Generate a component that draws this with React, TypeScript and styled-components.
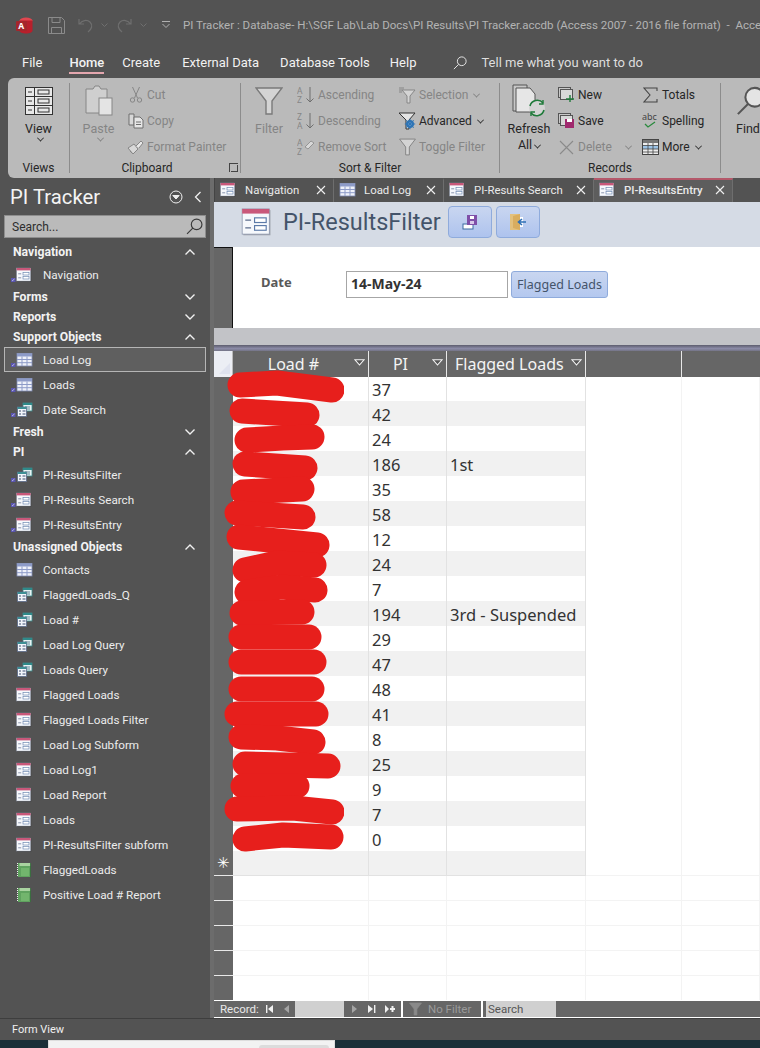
import React from 'react';
import styled, { createGlobalStyle } from 'styled-components';

const Global = createGlobalStyle`
  html, body { margin: 0; padding: 0; background: #535353; }
  * { box-sizing: border-box; }
  #root { width: 760px; height: 1048px; overflow: hidden; }
`;

const FONT = `Roboto, "Noto Sans", "Liberation Sans", sans-serif`;
const DATA_FONT = `"Noto Sans", "Open Sans", "Liberation Sans", sans-serif`;

const Page = styled.div`
  width: 760px; height: 1048px; display: flex; flex-direction: column;
  background: #535353; font-family: ${FONT}; overflow: hidden;
`;

/* ---------- Title bar ---------- */
const TitleBar = styled.div`
  height: 48px; display: flex; align-items: center; padding: 2px 0 0 16px; flex: none; overflow: hidden;
`;
const QuickGroup = styled.div`display: flex; align-items: center; flex: none;`;
const QuickSlot = styled.span<{ $w: number }>`
  width: ${p => p.$w}px; height: 20px; display: flex; align-items: center; flex: none;
`;
const TitleText = styled.div`
  font-size: 11.5px; color: #b4b4b4; white-space: pre;
`;

/* ---------- Ribbon tabs ---------- */
const TabStrip = styled.div`
  height: 30px; display: flex; align-items: flex-start; padding: 5px 0 0 22px; flex: none;
`;
const RibbonTab = styled.div<{ $active?: boolean; $left: number }>`
  font-size: 13px; line-height: 20px; height: 21px; color: #f2f2f2; margin-left: ${p => p.$left}px;
  font-weight: ${p => (p.$active ? 500 : 400)}; white-space: nowrap;
  border-bottom: ${p => (p.$active ? '2px solid #e3a6ae' : '2px solid transparent')};
`;
const TellMe = styled.div`
  display: flex; align-items: center; margin-left: 37px; gap: 14px; font-size: 13px; line-height: 20px; color: #dedede;
`;

/* ---------- Ribbon ---------- */
const Ribbon = styled.div`
  height: 100px; margin-left: 8px; background: #bababa; border-radius: 6px 0 0 6px;
  display: flex; flex: none; overflow: hidden;
`;
const RGroup = styled.div<{ $w: number; $last?: boolean }>`
  position: relative; width: ${p => p.$w}px; flex: none; display: flex; flex-direction: column;
  margin: 5px 0 5px 0; border-right: ${p => (p.$last ? 'none' : '1px solid #8c8c8c')};
`;
const RBody = styled.div`flex: 1; display: flex; min-height: 0;`;
const RLabel = styled.div<{ $pad?: number }>`
  height: 10px; line-height: 10px; font-size: 12px; text-align: center; color: #262626;
  padding-right: ${p => p.$pad || 0}px; white-space: nowrap; flex: none;
`;
const BigButton = styled.div<{ $w: number; $off?: boolean; $start?: boolean }>`
  width: ${p => p.$w}px; flex: none; display: flex; flex-direction: column;
  align-items: ${p => (p.$start ? 'flex-start' : 'center')};
  padding-left: ${p => (p.$start ? 15 : 0)}px;
  color: ${p => (p.$off ? '#858585' : '#262626')}; font-size: 12.5px; line-height: 16px; padding-top: 2px;
  white-space: nowrap;
`;
const BigIcon = styled.div`height: 32px; display: flex; align-items: center; justify-content: center; margin-bottom: 4px;`;
const Caret = styled.span<{ $off?: boolean; $gap?: number }>`
  display: inline-block; width: 5px; height: 5px; border: solid ${p => (p.$off ? '#858585' : '#333')};
  border-width: 0 1px 1px 0; transform: rotate(45deg) translate(-1px, -1px); margin-left: ${p => p.$gap || 3}px;
`;
const SmallCol = styled.div<{ $w: number }>`
  width: ${p => p.$w}px; flex: none; display: flex; flex-direction: column; margin-top: -1px;
`;
const SmallBtn = styled.div<{ $off?: boolean }>`
  height: 26px; flex: none; display: flex; align-items: center; gap: 3px; font-size: 12px; white-space: nowrap;
  color: ${p => (p.$off ? '#858585' : '#262626')};
`;
const IconSlot = styled.span<{ $w?: number }>`
  width: ${p => p.$w || 17}px; height: 18px; display: flex; align-items: center; justify-content: center; flex: none;
`;
const Launcher = styled.div`
  position: absolute; right: 2px; bottom: 1px; width: 9px; height: 9px;
  border: solid #444; border-width: 1px 0 0 1px;
  &::after { content: ''; position: absolute; right: 0; bottom: 0; width: 6px; height: 6px;
    border: solid #444; border-width: 0 1px 1px 0; }
`;

/* ---------- Main ---------- */
const Main = styled.div`height: 840px; display: flex; flex: none;`;

const Nav = styled.div`
  width: 210px; flex: none; display: flex; flex-direction: column; background: #535353;
`;
const NavHead = styled.div`
  height: 37px; display: flex; align-items: center; padding: 0 0 0 10px; flex: none;
  color: #f4f4f4; font-size: 20.3px;
`;
const NavTitle = styled.span`flex: 1;`;
const NavCtl = styled.span<{ $w: number }>`
  width: ${p => p.$w}px; display: flex; justify-content: center; align-items: center; flex: none;
`;
const NavSearch = styled.div`
  margin: 0 4px 0 4px; height: 23px; background: #bababa; border: 1px solid #8e8e8e; flex: none;
  display: flex; align-items: center; justify-content: space-between; padding: 0 2px 0 7px;
  font-size: 12px; color: #2d2d2d;
`;
const NavList = styled.div`margin-top: 4px; display: flex; flex-direction: column;`;
const NavHeader = styled.div`
  height: 20px; flex: none; display: flex; align-items: center; justify-content: space-between;
  padding: 0 14px 0 13px; font-size: 12.2px; font-weight: 700; color: #f2f2f2;
`;
const NavItem = styled.div<{ $sel?: boolean }>`
  height: 25px; flex: none; display: flex; align-items: center; gap: 11px;
  margin: 0 4px; padding-left: 11px; font-size: 11.7px; color: #ececec; white-space: nowrap;
  border: 1px solid ${p => (p.$sel ? '#b5b5b5' : 'transparent')};
  background: ${p => (p.$sel ? '#5f5f5f' : 'transparent')};
`;
const NavRule = styled.div`width: 4px; flex: none; background: #6c6c6c;`;

const Content = styled.div`flex: 1; min-width: 0; display: flex; flex-direction: column; position: relative;`;
const DocTabs = styled.div`
  height: 24px; flex: none; display: flex; background: #535353; border-left: 1px solid #444;
`;
const DocTab = styled.div<{ $w: number; $active?: boolean }>`
  width: ${p => p.$w}px; flex: none; display: flex; align-items: center; padding: 0 7px 3px 5px; gap: 9px;
  font-size: 11.4px; white-space: nowrap; color: #eaeaea;
  font-weight: ${p => (p.$active ? 500 : 400)};
  border-right: 1px solid #6e6e6e;
  border-top: ${p => (p.$active ? '2px solid #b4586a' : '2px solid transparent')};
  background: ${p => (p.$active ? '#5d5d5d' : 'transparent')};
`;
const DocTabLabel = styled.span`flex: 1;`;

const FormHead = styled.div`
  height: 45px; flex: none; background: #d5dbe5; display: flex; align-items: center;
  padding: 0 0 5px 27px;
`;
const FormTitle = styled.div`
  font-size: 23.5px; color: #44546a; margin: 0 8px 0 11px; white-space: nowrap; width: 157px;
`;
const FormBtn = styled.div`
  width: 44px; height: 32px; margin-right: 4px; border-radius: 4px; border: 1px solid #8fabdc;
  background: linear-gradient(#c9d6f0, #aec3ee); display: flex; align-items: center; justify-content: center;
`;

const Detail = styled.div`height: 81px; flex: none; display: flex; background: #fff; font-family: ${DATA_FONT};`;
const DetailSel = styled.div`
  width: 19px; flex: none; background: #666; border-right: 1px solid #111; border-top: 1px solid #111;
`;
const DetailBody = styled.div`flex: 1; display: flex; align-items: flex-start; padding: 24px 0 0 28px;`;
const DateLabel = styled.div`
  width: 85px; font-size: 13px; font-weight: 700; color: #595959; line-height: 23px;
`;
const DateInput = styled.div`
  width: 162px; height: 27px; border: 1px solid #a6a6a6; font-size: 14px; font-weight: 700; color: #333;
  padding: 0 0 0 4px; line-height: 23px; margin-right: 3px; background: #fff;
`;
const FlagBtn = styled.div`
  width: 97px; height: 27px; border-radius: 3px; border: 1px solid #8fabdc;
  background: linear-gradient(#c9d6f0, #b4c8ef); color: #44546a; font-size: 12.5px; line-height: 25px; text-align: center;
`;

const Band = styled.div`height: 17px; flex: none; background: #c2c3c7;`;
const Splitter = styled.div`
  height: 6px; flex: none; background: linear-gradient(#5d5d6e, #8c8ca8 60%, #737385);
`;

const Sheet = styled.div`flex: 1; min-height: 0; position: relative; overflow: hidden; background: #fff; font-family: ${DATA_FONT};`;
const Row = styled.div`
  display: grid; grid-template-columns: 19px 136px 78px 139px 96px 78px; height: 25px;
`;
const HeadSel = styled.div`
  background: #eceef4; position: relative; border-right: 1px solid #bbb;
  &::after { content: ''; position: absolute; right: 2px; bottom: 3px; width: 0; height: 0;
    border-left: 11px solid transparent; border-bottom: 11px solid #dfe2ee; }
`;
const HeadCell = styled.div<{ $line?: boolean; $left?: boolean }>`
  background: #666; color: #f4f4f4; font-size: 16px; position: relative; line-height: 26px;
  text-align: ${p => (p.$left ? 'left' : 'center')};
  padding: ${p => (p.$left ? '0 0 0 8px' : '0 14px 0 0')};
  border-right: ${p => (p.$line === false ? 'none' : '1px solid #e8e8e8')};
  white-space: nowrap;
`;
const SortMark = styled.svg`position: absolute; right: 3px; top: 8px;`;
const RowSel = styled.div`
  background: #666; border-bottom: 1px solid #e8e8e8; color: #fff; font-size: 15px; text-align: center; line-height: 22px;
`;
const Cell = styled.div<{ $alt?: boolean; $data?: boolean }>`
  background: ${p => (p.$alt ? '#f1f1f1' : '#fff')};
  border-right: 1px solid ${p => (p.$data ? '#e2e2e2' : '#f3f3f3')};
  border-bottom: 1px solid ${p => (p.$data ? '#e2e2e2' : '#f3f3f3')};
  font-size: 16.5px; line-height: 25px; color: #333; padding: 1px 0 0 3px; white-space: nowrap;
`;
const Scribble = styled.svg`position: absolute; left: 0; top: 0; pointer-events: none;`;

const RecordBar = styled.div`
  height: 18px; flex: none; display: flex; align-items: stretch; background: #fff; padding: 1px 0;
  font-size: 11.5px; color: #e8e8e8;
`;
const RecNav = styled.div`
  width: 187px; flex: none; display: flex; align-items: center; background: #666; padding-left: 6px;
`;
const RecLabel = styled.span`width: 40px; flex: none;`;
const RecGlyph = styled.span<{ $w: number; $dim?: boolean }>`
  width: ${p => p.$w}px; flex: none; display: flex; justify-content: center; opacity: ${p => (p.$dim ? 0.45 : 1)};
`;
const RecBox = styled.div`width: 49px; flex: none; height: 100%; background: #d0d0d0; margin: 0 1px;`;
const NoFilter = styled.div`
  width: 78px; flex: none; margin-left: 2px; background: #666; color: #9a9a9a; display: flex; align-items: center;
  padding-left: 6px; gap: 6px;
`;
const RecSearchWrap = styled.div`
  flex: 1; margin-left: 2px; background: #666; display: flex; padding-left: 3px;
`;
const RecSearch = styled.div`
  width: 70px; background: #d0d0d0; color: #555; padding-left: 2px; line-height: 16px;
`;

const Status = styled.div`
  height: 22px; flex: none; background: #535353; border-top: 1px solid #3e3e3e; color: #f0f0f0;
  font-size: 11px; line-height: 21px; padding-left: 12px;
`;
const Desktop = styled.div`flex: 1; background: #1b2f38; display: flex; padding-left: 48px;`;
const DesktopWindow = styled.div`
  width: 287px; background: #f2f2f2; border: 1px solid #ddd; border-bottom: none; display: flex; justify-content: flex-end; padding: 4px 5px 0 0;
`;
const DesktopPill = styled.div`width: 70px; background: #dcdcdc; border-radius: 3px 3px 0 0;`;
const OverSvg = styled.svg`overflow: visible; flex: none;`;

/* ---------- Icons ---------- */
const Shortcut = () => (
  <g>
    <rect x="-5" y="11" width="4.5" height="4" fill="#5a55b0" />
    <path d="M-4 14l2.5-2" stroke="#cfcfe8" strokeWidth="0.8" />
  </g>
);

const FormIco = ({ sc, size = 16 }: { sc?: boolean; size?: number }) => (
  <OverSvg width={size} height={size} viewBox="0 0 16 16">
    <rect x="1.2" y="1.6" width="14" height="13" fill="#000" opacity=".25" />
    <rect x=".6" y="1" width="14" height="13" fill="#f6f8fc" stroke="#8b94ac" strokeWidth=".4" />
    <rect x=".6" y="1" width="14" height="2.4" fill="#c9587a" />
    <path d="M2.2 6.8h3M2.2 10.8h3" stroke="#5c6c8c" strokeWidth=".7" />
    <rect x="7" y="5.6" width="6" height="2.4" fill="#fff" stroke="#5c7aa8" strokeWidth=".6" />
    <rect x="7" y="9.6" width="6" height="2.4" fill="#fff" stroke="#5c7aa8" strokeWidth=".6" />
    {sc && <Shortcut />}
  </OverSvg>
);
const TableIco = ({ sc }: { sc?: boolean }) => (
  <OverSvg width="16" height="16" viewBox="0 0 16 16">
    <rect x="1" y="1.5" width="15" height="12.5" fill="#eef1f9" stroke="#7f8cb4" strokeWidth=".8" />
    <rect x="1" y="1.5" width="15" height="3" fill="#8d9bc8" />
    <path d="M1 7.5h15M1 10.7h15M6 4.5v9.5M11 4.5v9.5" stroke="#8d9bc8" strokeWidth="1" />
    {sc && <Shortcut />}
  </OverSvg>
);
const QueryIco = ({ sc }: { sc?: boolean }) => (
  <OverSvg width="16" height="16" viewBox="0 0 16 16">
    <rect x="7" y="1" width="9" height="8" fill="#e8f3f3" stroke="#3c8c8c" strokeWidth=".8" />
    <rect x="7" y="1" width="9" height="2" fill="#2f8a8a" />
    <path d="M9 5h5M9 7h5" stroke="#3c6a80" strokeWidth=".8" />
    <rect x="1.5" y="5" width="9" height="9.5" fill="#f3f6fb" stroke="#5a6a88" strokeWidth=".8" />
    <rect x="1.5" y="5" width="9" height="2" fill="#3e8f94" />
    <path d="M3 9h2M6.5 9h3M3 12h2M6.5 12h3" stroke="#3f4f70" strokeWidth="1" />
    {sc && <Shortcut />}
  </OverSvg>
);
const ReportIco = () => (
  <svg width="16" height="16" viewBox="0 0 16 16">
    <rect x="2" y="1" width="12.5" height="14" fill="#5fa35f" />
    <rect x="3.5" y="1" width="11" height="3" fill="#a9d3a0" />
    <rect x="5" y="6" width="8" height="8" fill="#72b56d" />
    <path d="M1.5 1v14" stroke="#f0f0f0" strokeWidth="1" strokeDasharray="1 1" />
    <path d="M14.5 1v14" stroke="#34693a" strokeWidth=".8" />
  </svg>
);

const Chevron = ({ up }: { up?: boolean }) => (
  <svg width="12" height="8" viewBox="0 0 12 8" fill="none" stroke="#f0f0f0" strokeWidth="1.4">
    <path d={up ? 'M1.5 6.5 6 2l4.5 4.5' : 'M1.5 1.5 6 6l4.5-4.5'} />
  </svg>
);
const Close = () => (
  <svg width="10" height="10" viewBox="0 0 10 10" stroke="#f0f0f0" strokeWidth="1.1"><path d="M1 1l8 8M9 1L1 9" /></svg>
);
const Lens = ({ size = 14, color = '#e8e8e8', fill = 'none' }: { size?: number; color?: string; fill?: string }) => (
  <svg width={size} height={size} viewBox="0 0 16 16" fill={fill} stroke={color} strokeWidth="1.1">
    <circle cx="10" cy="6" r="5" /><path d="M6.4 9.6 1 15" />
  </svg>
);
const Sort = () => (
  <SortMark width="11" height="7" viewBox="0 0 11 7" fill="#555" stroke="#f4f4f4" strokeWidth="1.1">
    <path d="M1 .8h9L5.5 6z" />
  </SortMark>
);

const off = '#868686';
const ViewIco = () => (
  <svg width="28" height="28" viewBox="0 0 28 28" fill="#e9e9e9" stroke="#333" strokeWidth="1">
    <rect x=".5" y=".5" width="27" height="27" />
    <path d="M9.5.5v27M.5 9.5h27M.5 18.5h27" fill="none" />
    <path d="M3 5h4M3 14h4M3 23h4" fill="none" />
    <rect x="13" y="3" width="11" height="4" /><rect x="13" y="12" width="11" height="4" /><rect x="13" y="21" width="11" height="4" />
  </svg>
);
const PasteIco = () => (
  <svg width="28" height="32" viewBox="0 0 28 32" stroke={off} strokeWidth="1">
    <path d="M1 4h7l2-3h4l2 3h6v24H1z" fill="#cfcfcf" />
    <rect x="14" y="13" width="13" height="17" fill="#e4e4e4" />
  </svg>
);
const CutIco = () => (
  <svg width="14" height="16" viewBox="0 0 14 16" fill="none" stroke={off} strokeWidth="1">
    <path d="M3.5 0l5 11M10.5 0l-5 11" /><circle cx="3.5" cy="13" r="2.2" /><circle cx="10.5" cy="13" r="2.2" />
  </svg>
);
const CopyIco = () => (
  <svg width="16" height="16" viewBox="0 0 16 16" fill="#d8d8d8" stroke="#6f6f6f" strokeWidth="1">
    <path d="M1 1h5v11H1z" /><path d="M6 4h6l3 3v8H6z" fill="#e6e6e6" /><path d="M8 9h5M8 11.5h5" fill="none" />
  </svg>
);
const BrushIco = () => (
  <svg width="17" height="16" viewBox="0 0 17 16" fill="none" stroke={off} strokeWidth="1">
    <path d="M1 9l6-4 4 5-5 5z" fill="#d8d8d8" /><path d="M9 7l5-5 2 2-4 5" fill="#e8e8e8" /><path d="M3 12l2 2" />
  </svg>
);
const Funnel = ({ w = 17, h = 18, stroke = '#7a7a7a', fill = '#d4d4d4' }: { w?: number; h?: number; stroke?: string; fill?: string }) => (
  <svg width={w} height={h} viewBox="0 0 28 28" fill={fill} stroke={stroke} strokeWidth="1.4">
    <path d="M1 1h26L17 14v13h-6V14z" />
  </svg>
);
const SortIco = ({ a, b, mark }: { a: string; b: string; mark?: boolean }) => (
  <svg width="18" height="18" viewBox="0 0 18 18">
    <text x="0" y="8" fontSize="8.5" fontFamily="Noto Sans, sans-serif" fill={off}>{a}</text>
    <text x="0" y="17" fontSize="8.5" fontFamily="Noto Sans, sans-serif" fill={off}>{b}</text>
    {mark
      ? <path d="M8 9l6-6 3 2-6 6z" fill="#d8d8d8" stroke={off} strokeWidth=".8" />
      : <path d="M13 1v15M9.5 12.5 13 16l3.5-3.5" fill="none" stroke="#6f6f6f" strokeWidth="1" />}
  </svg>
);
const AdvancedIco = () => (
  <svg width="18" height="18" viewBox="0 0 18 18">
    <path d="M1 1h16L11 8v9H8V8z" fill="#e4e4e4" stroke="#333" strokeWidth="1" />
    <circle cx="12" cy="12" r="4" fill="#2e75b6" /><circle cx="12" cy="12" r="1.5" fill="#e8eef8" />
    <path d="M12 6.8v10.4M6.8 12h10.4M8.3 8.3l7.4 7.4M15.7 8.3l-7.4 7.4" stroke="#2e75b6" strokeWidth="1" />
  </svg>
);
const SelectionIco = () => (
  <svg width="18" height="18" viewBox="0 0 18 18">
    <path d="M4 4h13l-5 6v7H9v-7z" fill="#d4d4d4" stroke={off} strokeWidth="1" />
    <path d="M1 1h5v3H4v3H1z" fill="#9a9a9a" opacity=".8" />
  </svg>
);
const RefreshIco = () => (
  <svg width="34" height="34" viewBox="0 0 34 34" fill="none">
    <path d="M1 1h14v26H1z" fill="#c8c8c8" stroke="#555" />
    <path d="M4 4h14l5 6v18H4z" fill="#e6e6e6" stroke="#555" />
    <circle cx="25" cy="24" r="8" fill="#d4d4d4" />
    <path d="M18 22a7.5 7.5 0 0 1 13-3M32 26a7.5 7.5 0 0 1-13 3" stroke="#1f7a3a" strokeWidth="1.6" />
    <path d="M31 16v4h-4M19 32v-4h4" stroke="#1f7a3a" strokeWidth="1.4" />
  </svg>
);
const RecBase = ({ children }: { children?: React.ReactNode }) => (
  <svg width="17" height="16" viewBox="0 0 17 16" fill="none">
    <rect x=".5" y=".5" width="12" height="10" stroke="#555" fill="#c8c8c8" />
    <rect x="2.5" y="2.5" width="12" height="10" stroke="#555" fill="#d8d8d8" />
    {children}
  </svg>
);
const SumIco = () => (
  <svg width="15" height="16" viewBox="0 0 15 16" fill="none" stroke="#444" strokeWidth="1.1"><path d="M14 4V1H1l6 7-6 7h13v-3" /></svg>
);
const SpellIco = () => (
  <svg width="17" height="18" viewBox="0 0 17 18">
    <text x="0" y="8" fontSize="9" fontFamily="Noto Sans, sans-serif" fill="#444">abc</text>
    <path d="M3 12l3 3 7-5" fill="none" stroke="#2a8a3e" strokeWidth="1.3" />
  </svg>
);
const GridIco = () => (
  <svg width="17" height="16" viewBox="0 0 17 16">
    <rect x=".5" y=".5" width="16" height="15" fill="#eee" stroke="#444" />
    <rect x="1" y="1" width="15" height="3" fill="#777" />
    <rect x="1" y="6.5" width="15" height="3.5" fill="#9cc3e6" />
    <path d="M1 6.5h15M1 10h15M1 13h15M6 4v11M11 4v11" stroke="#444" strokeWidth=".8" />
  </svg>
);
const AccessIco = () => (
  <svg width="17" height="17" viewBox="0 0 17 17">
    <ellipse cx="10" cy="3.5" rx="6.5" ry="3" fill="#e0464f" />
    <path d="M3.5 3.5v10c0 1.8 3 3 6.5 3s6.5-1.2 6.5-3v-10z" fill="#b81f2b" />
    <rect x="0" y="4" width="11" height="10" rx="1" fill="#a4262c" />
    <text x="2.3" y="12" fontSize="8.5" fontWeight="700" fontFamily="Noto Sans, sans-serif" fill="#fff">A</text>
  </svg>
);
const SaveIco = () => (
  <svg width="17" height="17" viewBox="0 0 17 17" fill="none" stroke="#8b8b8b" strokeWidth="1">
    <path d="M.5.5h13l3 3v13H.5z" /><path d="M4 .5v5h8v-5M3.5 16.5v-6h10v6" />
  </svg>
);
const UndoIco = ({ flip }: { flip?: boolean }) => (
  <svg width="15" height="16" viewBox="0 0 15 16" fill="none" stroke="#6f6f6f" strokeWidth="1.2" transform={flip ? 'scale(-1 1)' : undefined}>
    <path d="M1 2v5h5M1.5 7C4 3 9 2.5 12 5c3 3 2 7-2 10" />
  </svg>
);
const SmallCaret = () => (
  <svg width="7" height="5" viewBox="0 0 7 5" fill="none" stroke="#6f6f6f"><path d="M.5.5l3 3 3-3" /></svg>
);
const RecTri = ({ d }: { d: string }) => (
  <svg width="10" height="8" viewBox="0 0 10 8" fill="#f0f0f0"><path d={d} /></svg>
);

/* ---------- Data ---------- */
type Kind = 'form' | 'table' | 'query' | 'report';
const Ico = ({ k, sc }: { k: Kind; sc?: boolean }) =>
  k === 'form' ? <FormIco sc={sc} /> : k === 'table' ? <TableIco sc={sc} /> : k === 'query' ? <QueryIco sc={sc} /> : <ReportIco />;

type NavEntry = { h: string; up: boolean } | { t: string; k: Kind; sc?: boolean; sel?: boolean };
const nav: NavEntry[] = [
  { h: 'Navigation', up: true },
  { t: 'Navigation', k: 'form', sc: true },
  { h: 'Forms', up: false },
  { h: 'Reports', up: false },
  { h: 'Support Objects', up: true },
  { t: 'Load Log', k: 'table', sc: true, sel: true },
  { t: 'Loads', k: 'table', sc: true },
  { t: 'Date Search', k: 'query', sc: true },
  { h: 'Fresh', up: false },
  { h: 'PI', up: true },
  { t: 'PI-ResultsFilter', k: 'query', sc: true },
  { t: 'PI-Results Search', k: 'form', sc: true },
  { t: 'PI-ResultsEntry', k: 'form', sc: true },
  { h: 'Unassigned Objects', up: true },
  { t: 'Contacts', k: 'table' },
  { t: 'FlaggedLoads_Q', k: 'query' },
  { t: 'Load #', k: 'query' },
  { t: 'Load Log Query', k: 'query' },
  { t: 'Loads Query', k: 'query' },
  { t: 'Flagged Loads', k: 'form' },
  { t: 'Flagged Loads Filter', k: 'form' },
  { t: 'Load Log Subform', k: 'form' },
  { t: 'Load Log1', k: 'form' },
  { t: 'Load Report', k: 'form' },
  { t: 'Loads', k: 'form' },
  { t: 'PI-ResultsFilter subform', k: 'form' },
  { t: 'FlaggedLoads', k: 'report' },
  { t: 'Positive Load # Report', k: 'report' },
];

const tabs = [
  { t: 'Navigation', w: 119, k: 'form' as Kind },
  { t: 'Load Log', w: 110, k: 'table' as Kind },
  { t: 'PI-Results Search', w: 150, k: 'form' as Kind },
  { t: 'PI-ResultsEntry', w: 139, k: 'form' as Kind, active: true },
];

const rows: [string, string][] = [
  ['37', ''], ['42', ''], ['24', ''], ['186', '1st'], ['35', ''], ['58', ''], ['12', ''], ['24', ''], ['7', ''],
  ['194', '3rd - Suspended'], ['29', ''], ['47', ''], ['48', ''], ['41', ''], ['8', ''], ['25', ''], ['9', ''], ['7', ''], ['0', ''],
];

const strokes = [
  'M26 34 L63 32 L118 39', 'M28 60 L93 64', 'M33 89 L69 87 L98 86', 'M31 113 L91 117', 'M29 141 L88 138',
  'M23 162 L89 166', 'M25 186 L103 194', 'M31 219 L63 212 L100 214', 'M33 241 L68 236 L101 239', 'M28 262 L88 261',
  'M27 286 L95 286', 'M27 311 L100 311', 'M27 338 L98 338', 'M23 363 L102 363', 'M27 386 L63 387 L99 391',
  'M31 413 L114 415', 'M29 435 L83 435', 'M23 458 L79 457 L118 461', 'M31 488 L69 484 L117 486',
];

export default function App() {
  return (
    <Page>
      <Global />
      <TitleBar>
        <QuickGroup>
          <QuickSlot $w={32}><AccessIco /></QuickSlot>
          <QuickSlot $w={30}><SaveIco /></QuickSlot>
          <QuickSlot $w={23}><UndoIco /></QuickSlot>
          <QuickSlot $w={16}><SmallCaret /></QuickSlot>
          <QuickSlot $w={23}><UndoIco flip /></QuickSlot>
          <QuickSlot $w={22}><SmallCaret /></QuickSlot>
          <QuickSlot $w={21}>
            <svg width="8" height="8" viewBox="0 0 8 8" fill="none" stroke="#b0b0b0"><path d="M0 .5h8M.5 3l3.5 3.5L7.5 3" /></svg>
          </QuickSlot>
        </QuickGroup>
        <TitleText>{'PI Tracker : Database- H:\\SGF Lab\\Lab Docs\\PI Results\\PI Tracker.accdb (Access 2007 - 2016 file format)  -  Access'}</TitleText>
      </TitleBar>

      <TabStrip>
        <RibbonTab $left={0}>File</RibbonTab>
        <RibbonTab $left={27} $active>Home</RibbonTab>
        <RibbonTab $left={18}>Create</RibbonTab>
        <RibbonTab $left={22}>External Data</RibbonTab>
        <RibbonTab $left={21}>Database Tools</RibbonTab>
        <RibbonTab $left={20}>Help</RibbonTab>
        <TellMe><Lens />Tell me what you want to do</TellMe>
      </TabStrip>

      <Ribbon>
        <RGroup $w={62}>
          <RBody>
            <BigButton $w={61}>
              <BigIcon><ViewIco /></BigIcon>
              View
              <Caret />
            </BigButton>
          </RBody>
          <RLabel>Views</RLabel>
        </RGroup>
        <RGroup $w={171}>
          <RBody>
            <BigButton $w={57} $off>
              <BigIcon><PasteIco /></BigIcon>
              Paste
              <Caret $off />
            </BigButton>
            <SmallCol $w={110}>
              <SmallBtn $off><IconSlot><CutIco /></IconSlot>Cut</SmallBtn>
              <SmallBtn $off><IconSlot><CopyIco /></IconSlot>Copy</SmallBtn>
              <SmallBtn $off><IconSlot><BrushIco /></IconSlot>Format Painter</SmallBtn>
            </SmallCol>
          </RBody>
          <RLabel $pad={16}>Clipboard</RLabel>
          <Launcher />
        </RGroup>
        <RGroup $w={259}>
          <RBody>
            <BigButton $w={56} $off>
              <BigIcon><Funnel w={28} h={28} /></BigIcon>
              Filter
            </BigButton>
            <SmallCol $w={101}>
              <SmallBtn $off><IconSlot $w={18}><SortIco a="A" b="Z" /></IconSlot>Ascending</SmallBtn>
              <SmallBtn $off><IconSlot $w={18}><SortIco a="Z" b="A" /></IconSlot>Descending</SmallBtn>
              <SmallBtn $off><IconSlot $w={18}><SortIco a="A" b="Z" mark /></IconSlot>Remove Sort</SmallBtn>
            </SmallCol>
            <SmallCol $w={100}>
              <SmallBtn $off><IconSlot $w={18}><SelectionIco /></IconSlot>Selection<Caret $off /></SmallBtn>
              <SmallBtn><IconSlot $w={18}><AdvancedIco /></IconSlot>Advanced<Caret /></SmallBtn>
              <SmallBtn $off><IconSlot $w={18}><Funnel /></IconSlot>Toggle Filter</SmallBtn>
            </SmallCol>
          </RBody>
          <RLabel>Sort &amp; Filter</RLabel>
        </RGroup>
        <RGroup $w={221}>
          <RBody>
            <BigButton $w={58}>
              <BigIcon><RefreshIco /></BigIcon>
              Refresh
              <span>All<Caret /></span>
            </BigButton>
            <SmallCol $w={84}>
              <SmallBtn><IconSlot><RecBase><path d="M8 12h8M12 8v7" stroke="#1f7a3a" strokeWidth="1.4" /></RecBase></IconSlot>New</SmallBtn>
              <SmallBtn><IconSlot><RecBase><rect x="7" y="6" width="9" height="9" fill="#a02a6e" /><rect x="9" y="6" width="5" height="3" fill="#fff" /></RecBase></IconSlot>Save</SmallBtn>
              <SmallBtn $off>
                <IconSlot><svg width="15" height="15" viewBox="0 0 15 15" stroke="#8a8a8a" strokeWidth="1.1"><path d="M1 1l13 13M14 1L1 14" /></svg></IconSlot>
                Delete<Caret $off $gap={11} />
              </SmallBtn>
            </SmallCol>
            <SmallCol $w={78}>
              <SmallBtn><IconSlot><SumIco /></IconSlot>Totals</SmallBtn>
              <SmallBtn><IconSlot><SpellIco /></IconSlot>Spelling</SmallBtn>
              <SmallBtn><IconSlot><GridIco /></IconSlot>More<Caret /></SmallBtn>
            </SmallCol>
          </RBody>
          <RLabel>Records</RLabel>
        </RGroup>
        <RGroup $w={60} $last>
          <RBody>
            <BigButton $w={48} $start>
              <BigIcon><Lens size={30} color="#555" fill="#e4e4e4" /></BigIcon>
              Find
            </BigButton>
          </RBody>
        </RGroup>
      </Ribbon>

      <Main>
        <Nav>
          <NavHead>
            <NavTitle>PI Tracker</NavTitle>
            <NavCtl $w={18}>
              <svg width="14" height="14" viewBox="0 0 14 14" fill="none" stroke="#f0f0f0">
                <circle cx="7" cy="7" r="6" /><path d="M3.8 5.5h6.4L7 9z" fill="#f0f0f0" />
              </svg>
            </NavCtl>
            <NavCtl $w={25}>
              <svg width="8" height="12" viewBox="0 0 8 12" fill="none" stroke="#f0f0f0" strokeWidth="1.3"><path d="M6.5 1 1.5 6l5 5" /></svg>
            </NavCtl>
          </NavHead>
          <NavSearch>Search...<Lens size={17} color="#3a3a3a" /></NavSearch>
          <NavList>
            {nav.map((n, i) =>
              'h' in n ? (
                <NavHeader key={i}>{n.h}<Chevron up={n.up} /></NavHeader>
              ) : (
                <NavItem key={i} $sel={n.sel}><Ico k={n.k} sc={n.sc} />{n.t}</NavItem>
              )
            )}
          </NavList>
        </Nav>
        <NavRule />
        <Content>
          <DocTabs>
            {tabs.map(t => (
              <DocTab key={t.t} $w={t.w} $active={t.active}>
                <Ico k={t.k} />
                <DocTabLabel>{t.t}</DocTabLabel>
                <Close />
              </DocTab>
            ))}
          </DocTabs>
          <FormHead>
            <FormIco size={31} />
            <FormTitle>PI-ResultsFilter</FormTitle>
            <FormBtn>
              <svg width="16" height="16" viewBox="0 0 16 16">
                <rect x="1" y="10" width="10" height="5" fill="#fff" stroke="#3c6aa0" />
                <rect x="5" y="1" width="10" height="10" fill="#7f4fa8" />
                <rect x="8" y="2" width="4" height="3" fill="#fff" />
                <rect x="8" y="7" width="4" height="3" fill="#d9c8e8" />
              </svg>
            </FormBtn>
            <FormBtn>
              <svg width="18" height="18" viewBox="0 0 18 18">
                <rect x="1" y="1" width="10" height="16" fill="#e3c07c" />
                <path d="M4 3l7-2v16l-7-2z" fill="#d9ad5f" />
                <rect x="11" y="4" width="3" height="10" fill="#fff" />
                <path d="M17 9H10M13 6 9.5 9l3.5 3" fill="none" stroke="#2e6fb5" strokeWidth="1.6" />
              </svg>
            </FormBtn>
          </FormHead>
          <Detail>
            <DetailSel />
            <DetailBody>
              <DateLabel>Date</DateLabel>
              <DateInput>14-May-24</DateInput>
              <FlagBtn>Flagged Loads</FlagBtn>
            </DetailBody>
          </Detail>
          <Band />
          <Splitter />
          <Sheet>
            <Row>
              <HeadSel />
              <HeadCell>Load #<Sort /></HeadCell>
              <HeadCell>PI<Sort /></HeadCell>
              <HeadCell $left>Flagged Loads<Sort /></HeadCell>
              <HeadCell />
              <HeadCell $line={false} />
            </Row>
            {rows.map((r, i) => {
              const alt = i % 2 === 1;
              return (
                <Row key={i}>
                  <RowSel />
                  <Cell $alt={alt} $data />
                  <Cell $alt={alt} $data>{r[0]}</Cell>
                  <Cell $alt={alt} $data>{r[1]}</Cell>
                  <Cell />
                  <Cell />
                </Row>
              );
            })}
            <Row>
              <RowSel>✳</RowSel>
              <Cell $alt $data /><Cell $alt $data /><Cell $alt $data /><Cell /><Cell />
            </Row>
            {[0, 1, 2, 3, 4].map(i => (
              <Row key={i}><RowSel /><Cell /><Cell /><Cell /><Cell /><Cell /></Row>
            ))}
            <Scribble width="130" height="520" viewBox="0 0 130 520">
              <g fill="none" stroke="#e71f1c" strokeWidth="25" strokeLinecap="round" strokeLinejoin="round">
                {strokes.map(d => <path key={d} d={d} />)}
              </g>
            </Scribble>
          </Sheet>
          <RecordBar>
            <RecNav>
              <RecLabel>Record:</RecLabel>
              <RecGlyph $w={17}><RecTri d="M2 0h1.4v8H2zM9 0v8L4 4z" /></RecGlyph>
              <RecGlyph $w={17} $dim><RecTri d="M8 0v8L3 4z" /></RecGlyph>
              <RecBox />
              <RecGlyph $w={18} $dim><RecTri d="M3 0v8l5-4z" /></RecGlyph>
              <RecGlyph $w={18}><RecTri d="M1 0v8l5-4zM7 0h1.4v8H7z" /></RecGlyph>
              <RecGlyph $w={18}><RecTri d="M0 0v8l4-4zM5 3h5v2H5zM6.5 1h2v6h-2z" /></RecGlyph>
            </RecNav>
            <NoFilter>
              <Funnel w={13} h={14} stroke="#8a8a8a" fill="#8a8a8a" />
              No Filter
            </NoFilter>
            <RecSearchWrap><RecSearch>Search</RecSearch></RecSearchWrap>
          </RecordBar>
        </Content>
      </Main>

      <Status>Form View</Status>
      <Desktop>
        <DesktopWindow><DesktopPill /></DesktopWindow>
      </Desktop>
    </Page>
  );
}
